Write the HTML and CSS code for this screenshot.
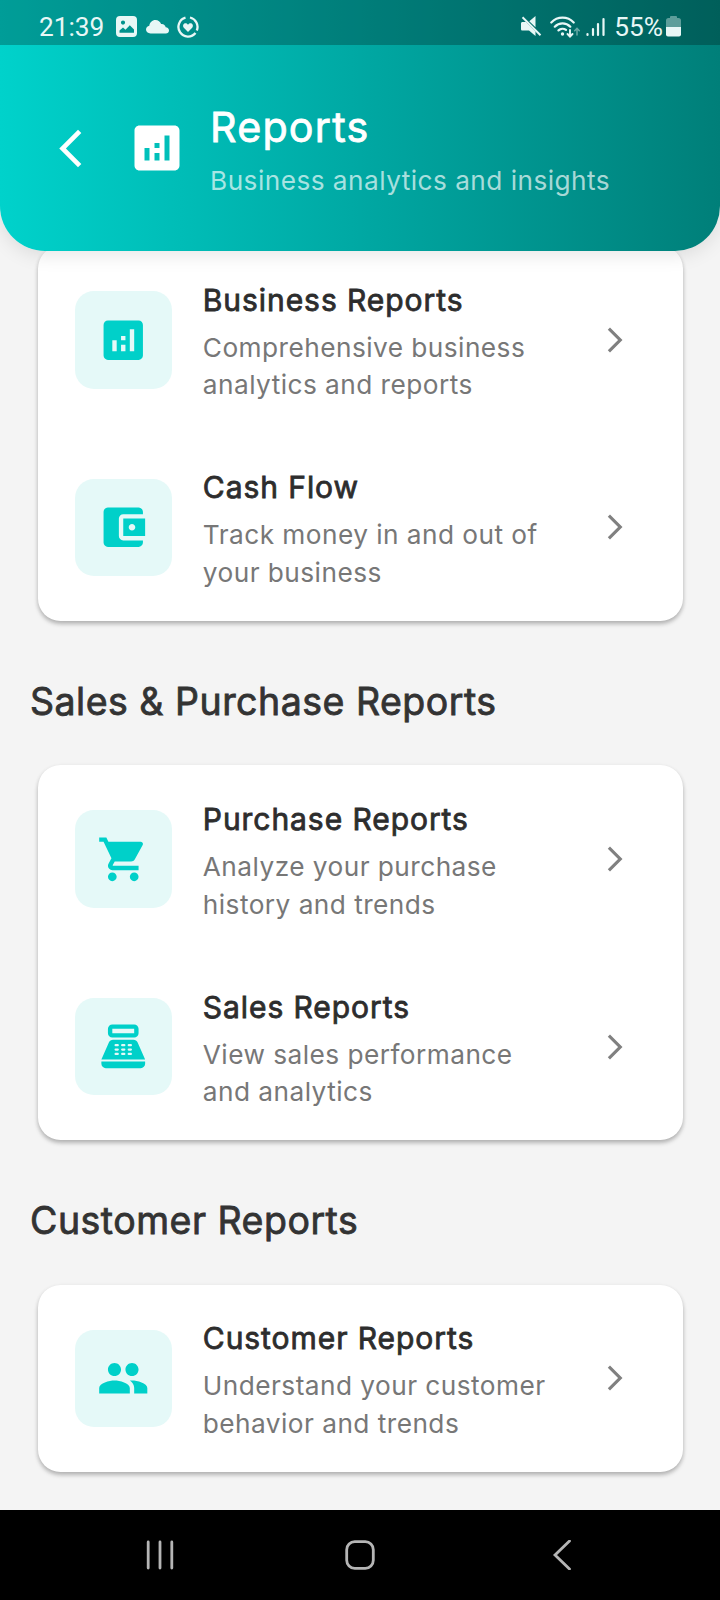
FILE: index.html
```html
<!DOCTYPE html>
<html lang="en">
<head>
<meta charset="utf-8">
<title>Reports</title>
<link rel="stylesheet" href="styles.css">
</head>
<body>
<svg width="0" height="0" class="defs">
  <symbol id="analytics" viewBox="0 0 24 24"><path d="M19 3H5c-1.100 0-2 .900-2 2v14c0 1.100.900 2 2 2h14c1.100 0 2-.900 2-2V5c0-1.100-.900-2-2-2zM9 17H7v-5h2zm4 0h-2v-3h2zm0-5h-2v-2h2zm4 5h-2V7h2z"/></symbol>
  <symbol id="chevron" viewBox="0 0 24 24"><path d="M6.230 20.230 8 22l10-10L8 2 6.230 3.770 14.460 12z"/></symbol>
</svg>
<header class="header">
  <div class="status">
    <span class="status-text time">21:39</span>
    <svg class="st-image" width="21" height="21" viewBox="0 0 21 21"><path fill-rule="evenodd" d="M4 0h13a4 4 0 0 1 4 4v13a4 4 0 0 1-4 4H4a4 4 0 0 1-4-4V4a4 4 0 0 1 4-4zM7 4.500a2.100 2.100 0 1 0 0 4.200 2.100 2.100 0 0 0 0-4.200zM3.500 14.500v2.200h14.500v-3.200l-4.200-4.300-4.300 4.600-2.500-2.300z"/></svg>
    <svg class="st-cloud" width="23" height="14" viewBox="0 0 23 14"><path d="M4.500 13.500C1.800 13.500 0 11.700 0 9.600 0 7.500 1.500 6 3.300 5.700 3.700 2.500 6.200 0 9.400 0c2.800 0 5 1.700 5.700 4.100 2.400-.300 4.200 1 4.600 3.200C21.600 7.500 23 8.800 23 10.500s-1.400 3-3.200 3z"/></svg>
    <svg class="st-heart" width="22" height="22" viewBox="0 0 22 22"><path fill="none" stroke="#e8f7f6" stroke-width="2.300" d="M8.500 1.700A9.600 9.600 0 1 0 18.500 17M13 1.500A9.600 9.600 0 0 1 19.800 14.500"/><path d="M11 16 6.800 11.700C5.300 9.900 6.300 7.300 8.500 7.300c1.200 0 2 .700 2.500 1.500.500-.800 1.300-1.500 2.500-1.500 2.200 0 3.200 2.600 1.700 4.400z"/></svg>
    <span class="spacer"></span>
    <svg class="st-mute" width="21" height="21" viewBox="0 0 21 21"><path d="M14.500 0v11.200L8.300 5.300zM1.500 6h3.400l9.600 9.600V20L8 14.500H1.500C.6 14.500 0 14 0 13V7.500C0 6.600.6 6 1.500 6z"/><path d="M1.500 1.200 19.500 19.200" stroke="#e8f7f6" stroke-width="2"/></svg>
    <svg class="st-wifi" width="31" height="24" viewBox="0 0 31 24"><g fill="none" stroke="#e8f7f6" stroke-width="2.200" stroke-linecap="round"><path d="M1.300 7.500a15.500 15.500 0 0 1 22.400 0M4.800 11.700a10.700 10.700 0 0 1 15.500 0M8.500 15.400a5.800 5.800 0 0 1 7.500-.500"/><path stroke-width="1.900" d="M20 15v6.500m-2.500-2.500 2.500 2.700 2.500-2.700"/><path stroke-width="1.500" opacity=".45" d="M27 20v-6.500m-2.300 2.300L27 13.300l2.300 2.500"/></g><circle cx="12.500" cy="19" r="1.700"/></svg>
    <svg class="st-signal" width="19" height="20" viewBox="0 0 19 20"><path fill="none" stroke="#e8f7f6" stroke-width="2.200" stroke-linecap="round" d="M1.500 17v1M7 12v6M12 7v11M17.500 2v16"/></svg>
    <span class="status-text">55%</span>
    <svg class="st-battery" width="15" height="21" viewBox="0 0 15 21"><path opacity=".4" d="M4 2V1q0-1 1-1h5q1 0 1 1v1h1.500Q15 2 15 4.500V11H0V4.500Q0 2 2.500 2z"/><path d="M0 11h15v7.500q0 2-2 2H2q-2 0-2-2z"/></svg>
  </div>
  <div class="bar">
    <svg class="back" width="45" height="45" viewBox="0 0 24 24"><path d="M17.770 3.770 16 2 6 12l10 10 1.770-1.770L9.540 12z"/></svg>
    <svg class="logo" width="60" height="60"><use href="#analytics"/></svg>
    <div class="heading">
      <h1 class="title">Reports</h1>
      <p class="subtitle">Business analytics and insights</p>
    </div>
  </div>
</header>
<main class="content">
  <section class="card">
    <div class="row">
      <span class="tile"><svg class="icon"><use href="#analytics"/></svg></span>
      <div class="copy"><h3 class="name">Business Reports</h3><p class="desc">Comprehensive business<br>analytics and reports</p></div>
      <svg class="chev"><use href="#chevron"/></svg>
    </div>
    <div class="row">
      <span class="tile"><svg class="icon" viewBox="0 0 24 24"><path d="M21 18v1c0 1.100-.900 2-2 2H5c-1.110 0-2-.900-2-2V5c0-1.100.890-2 2-2h14c1.100 0 2 .900 2 2v1h-9c-1.110 0-2 .900-2 2v8c0 1.100.890 2 2 2h9zm-9-2h10V8H12v8zm4-2.500c-.830 0-1.500-.670-1.500-1.500s.670-1.500 1.500-1.500 1.500.670 1.500 1.500-.670 1.500-1.500 1.500z"/></svg></span>
      <div class="copy"><h3 class="name">Cash Flow</h3><p class="desc">Track money in and out of<br>your business</p></div>
      <svg class="chev"><use href="#chevron"/></svg>
    </div>
  </section>
  <h2 class="section">Sales &amp; Purchase Reports</h2>
  <section class="card">
    <div class="row">
      <span class="tile"><svg class="icon" viewBox="0 0 24 24"><path d="M7 18c-1.100 0-1.990.900-1.990 2S5.900 22 7 22s2-.900 2-2-.900-2-2-2zM1 2v2h2l3.600 7.590-1.350 2.450c-.160.280-.250.610-.250.960 0 1.100.900 2 2 2h12v-2H7.420c-.140 0-.250-.110-.250-.250l.030-.120.900-1.630h7.450c.750 0 1.410-.410 1.750-1.030l3.580-6.490c.080-.140.120-.310.120-.480 0-.550-.450-1-1-1H5.210l-.940-2H1zm16 16c-1.100 0-1.990.900-1.990 2s.890 2 1.990 2 2-.900 2-2-.900-2-2-2z"/></svg></span>
      <div class="copy"><h3 class="name">Purchase Reports</h3><p class="desc">Analyze your purchase<br>history and trends</p></div>
      <svg class="chev"><use href="#chevron"/></svg>
    </div>
    <div class="row">
      <span class="tile"><svg class="icon" viewBox="0 0 24 24"><path fill-rule="evenodd" d="M17 2H7c-1.100 0-2 .900-2 2v2c0 1.100.900 2 2 2h10c1.100 0 2-.900 2-2V4c0-1.100-.900-2-2-2zm0 4H7V4h10v2zM20 22H4c-1.100 0-2-.900-2-2v-1h20v1c0 1.100-.900 2-2 2zM18.530 10.190C18.210 9.470 17.490 9 16.700 9H7.300c-.790 0-1.510.470-1.830 1.190L2 18h20l-3.470-7.810zM9.500 16h-1a.5.5 0 0 1 0-1h1a.5.5 0 0 1 0 1zm0-2h-1a.5.5 0 0 1 0-1h1a.5.5 0 0 1 0 1zm0-2h-1a.5.5 0 0 1 0-1h1a.5.5 0 0 1 0 1zm3 4h-1a.5.5 0 0 1 0-1h1a.5.5 0 0 1 0 1zm0-2h-1a.5.5 0 0 1 0-1h1a.5.5 0 0 1 0 1zm0-2h-1a.5.5 0 0 1 0-1h1a.5.5 0 0 1 0 1zm3 4h-1a.5.5 0 0 1 0-1h1a.5.5 0 0 1 0 1zm0-2h-1a.5.5 0 0 1 0-1h1a.5.5 0 0 1 0 1zm0-2h-1a.5.5 0 0 1 0-1h1a.5.5 0 0 1 0 1z"/></svg></span>
      <div class="copy"><h3 class="name">Sales Reports</h3><p class="desc">View sales performance<br>and analytics</p></div>
      <svg class="chev"><use href="#chevron"/></svg>
    </div>
  </section>
  <h2 class="section">Customer Reports</h2>
  <section class="card">
    <div class="row">
      <span class="tile"><svg class="icon" viewBox="0 0 24 24"><path d="M16 11c1.660 0 2.990-1.340 2.990-3S17.660 5 16 5s-3 1.340-3 3 1.340 3 3 3zm-8 0c1.660 0 2.990-1.340 2.990-3S9.660 5 8 5 5 6.340 5 8s1.340 3 3 3zm0 2c-2.330 0-7 1.170-7 3.500V19h14v-2.500c0-2.330-4.670-3.500-7-3.500zm8 0c-.290 0-.620.020-.970.050 1.160.840 1.970 1.970 1.970 3.450V19h6v-2.500c0-2.330-4.670-3.500-7-3.500z"/></svg></span>
      <div class="copy"><h3 class="name">Customer Reports</h3><p class="desc">Understand your customer<br>behavior and trends</p></div>
      <svg class="chev"><use href="#chevron"/></svg>
    </div>
  </section>
</main>
<nav class="nav">
  <svg width="30" height="30" viewBox="0 0 30 30"><path d="M3.200 2v26M15 2v26M26.800 2v26"/></svg>
  <svg width="30" height="30" viewBox="0 0 30 30"><rect x="1.700" y="1.700" width="26.600" height="26.600" rx="8"/></svg>
  <svg width="30" height="30" viewBox="0 0 30 30"><path d="M23.500 1 9 15l14.500 14"/></svg>
</nav>
</body>
</html>
```
FILE: styles.css
```css
body {
  margin: 0;
  width: 720px;
  height: 1600px;
  display: flex;
  flex-direction: column;
  overflow: hidden;
  background: #f4f4f4;
  font-family: Inter, "Liberation Sans", sans-serif;
  font-optical-sizing: none;
}
h1, h2, h3, p { margin: 0; white-space: nowrap; }
svg { flex: none; display: block; }
.defs { position: absolute; }
.header {
  position: relative;
  z-index: 1;
  box-sizing: border-box;
  height: 251px;
  flex: none;
  border-radius: 0 0 45px 45px;
  background: linear-gradient(90deg, #00d2cb, #00a8a3 50%, #007f79);
  box-shadow: 0 4px 19px rgba(0, 0, 0, .1);
}
.status {
  height: 45px;
  box-sizing: border-box;
  padding: 8px 39px 0 39px;
  display: flex;
  align-items: center;
  background: rgba(0, 0, 0, .25);
  fill: #e8f7f6;
}
.status-text {
  font: 26.250px/38px Roboto, sans-serif;
  color: #e8f7f6;
}
.time { width: 65px; }
.spacer { flex: 1; }
.st-image { margin-left: 12px; }
.st-cloud { margin-left: 9px; }
.st-heart { margin-left: 8px; }
.st-mute { margin-right: 8px; }
.st-wifi { margin-right: 5px; }
.st-signal { margin-right: 9px; }
.st-battery { margin-left: 3px; }
.bar {
  display: flex;
  align-items: center;
  height: 206px;
  padding-left: 48px;
  fill: #fff;
}
.logo { margin-left: 34px; }
.heading { margin-left: 23px; padding-top: 4px; }
.title, .name, .section {
  font-weight: 400;
  -webkit-text-stroke: .8px currentColor;
}
.title {
  font-size: 41.250px;
  line-height: 50px;
  letter-spacing: 1.200px;
  color: #fff;
}
.subtitle {
  margin-top: 10px;
  font-size: 26.250px;
  line-height: 37px;
  font-weight: 400;
  letter-spacing: .450px;
  color: rgba(255, 255, 255, .66);
}
.content {
  flex: none;
  height: 1264px;
  margin-top: -5px;
  padding: 0 37.500px;
  box-sizing: border-box;
}
.card {
  border-radius: 22.500px;
  background: #fff;
  box-shadow: 0 3px 4px rgba(0, 0, 0, .25), 0 1px 5px rgba(0, 0, 0, .05);
}
.row {
  height: 187.500px;
  padding: 0 45px 0 37.300px;
  box-sizing: border-box;
  display: flex;
  align-items: center;
}
.tile {
  width: 97.500px;
  height: 97.500px;
  flex: none;
  border-radius: 19px;
  display: grid;
  place-items: center;
  background: #e5f9f8;
}
.icon { width: 52.500px; height: 52.500px; fill: #00d0c9; }
.copy { flex: 1; margin-left: 30.500px; padding-top: 3px; }
.name {
  font-size: 30px;
  line-height: 42px;
  letter-spacing: .940px;
  color: #2d2d2d;
}
.desc {
  margin-top: 8px;
  font-size: 26.250px;
  line-height: 37.500px;
  font-weight: 400;
  letter-spacing: .450px;
  color: #777;
}
.chev { width: 30px; height: 30px; margin-right: 8px; fill: #808080; }
.section {
  margin: 0 0 0 -7.500px;
  padding: 52px 0 34.250px;
  font-size: 37.500px;
  line-height: 58px;
  letter-spacing: .490px;
  color: #333;
}
.nav {
  height: 90px;
  flex: none;
  display: flex;
  justify-content: space-between;
  align-items: center;
  padding: 0 144.500px;
  background: #000;
  fill: none;
  stroke: #b5b5b5;
  stroke-width: 2.800px;
  stroke-linecap: round;
}
```
